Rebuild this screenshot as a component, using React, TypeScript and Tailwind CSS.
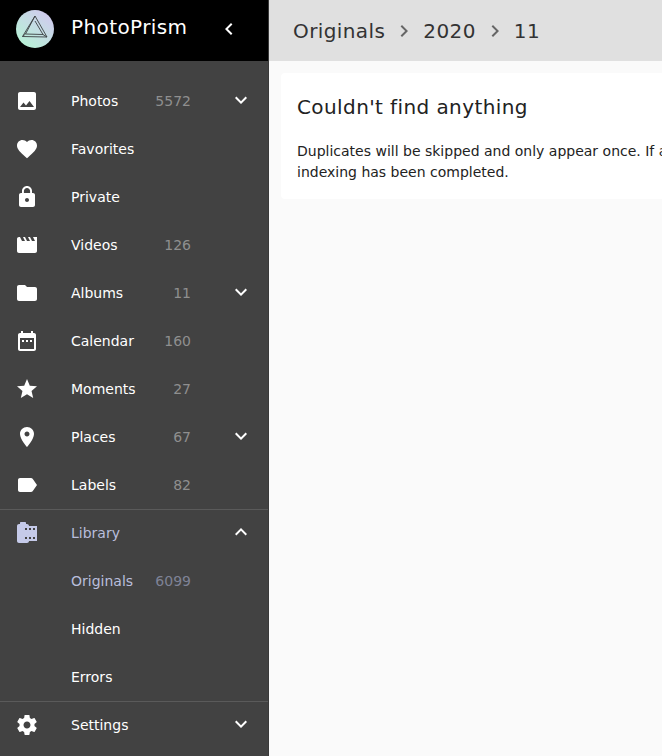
import { ReactNode } from 'react';

const paths = {
  photo: 'M21 19V5c0-1.1-.9-2-2-2H5c-1.1 0-2 .9-2 2v14c0 1.1.9 2 2 2h14c1.1 0 2-.9 2-2zM8.5 13.5l2.5 3.01L14.5 12l4.5 6H5l3.5-4.5z',
  heart: 'M12 21.35l-1.45-1.32C5.4 15.36 2 12.28 2 8.5 2 5.42 4.42 3 7.5 3c1.74 0 3.41.81 4.5 2.09C13.09 3.81 14.76 3 16.5 3 19.58 3 22 5.42 22 8.5c0 3.78-3.4 6.86-8.55 11.54L12 21.35z',
  lock: 'M18 8h-1V6c0-2.76-2.24-5-5-5S7 3.24 7 6v2H6c-1.1 0-2 .9-2 2v10c0 1.1.9 2 2 2h12c1.1 0 2-.9 2-2V10c0-1.1-.9-2-2-2zm-6 9c-1.1 0-2-.9-2-2s.9-2 2-2 2 .9 2 2-.9 2-2 2zm3.1-9H8.9V6c0-1.71 1.39-3.1 3.1-3.1 1.71 0 3.1 1.39 3.1 3.1v2z',
  movie: 'M18 4l2 4h-3l-2-4h-2l2 4h-3l-2-4H8l2 4H7L5 4H4c-1.1 0-1.99.9-1.99 2L2 18c0 1.1.9 2 2 2h16c1.1 0 2-.9 2-2V4h-4z',
  folder: 'M10 4H4c-1.1 0-1.99.9-1.99 2L2 18c0 1.1.9 2 2 2h16c1.1 0 2-.9 2-2V8c0-1.1-.9-2-2-2h-8l-2-2z',
  calendar: 'M9 11H7v2h2v-2zm4 0h-2v2h2v-2zm4 0h-2v2h2v-2zm2-7h-1V2h-2v2H8V2H6v2H5c-1.11 0-1.99.9-1.99 2L3 20c0 1.1.89 2 2 2h14c1.1 0 2-.9 2-2V6c0-1.1-.9-2-2-2zm0 16H5V9h14v11z',
  star: 'M12 17.27L18.18 21l-1.64-7.03L22 9.24l-7.19-.61L12 2 9.19 8.63 2 9.24l5.46 4.73L5.82 21z',
  place: 'M12 2C8.13 2 5 5.13 5 9c0 5.25 7 13 7 13s7-7.75 7-13c0-3.87-3.13-7-7-7zm0 9.5c-1.38 0-2.5-1.12-2.5-2.5s1.12-2.5 2.5-2.5 2.5 1.12 2.5 2.5-1.12 2.5-2.5 2.5z',
  label: 'M17.63 5.84C17.27 5.33 16.67 5 16 5L5 5.01C3.9 5.01 3 5.9 3 7v10c0 1.1.9 1.99 2 1.99L16 19c.67 0 1.27-.33 1.63-.84L22 12l-4.37-6.16z',
  roll: 'M14 5c0-1.1-.9-2-2-2h-1V2c0-.55-.45-1-1-1H6c-.55 0-1 .45-1 1v1H4c-1.1 0-2 .9-2 2v15c0 1.1.9 2 2 2h8c1.1 0 2-.9 2-2h8V5h-8zm-2 13h-2v-2h2v2zm0-9h-2V7h2v2zm4 9h-2v-2h2v2zm0-9h-2V7h2v2zm4 9h-2v-2h2v2zm0-9h-2V7h2v2z',
  settings: 'M19.43 12.98c.04-.32.07-.64.07-.98s-.03-.66-.07-.98l2.11-1.65c.19-.15.24-.42.12-.64l-2-3.46c-.12-.22-.39-.3-.61-.22l-2.49 1c-.52-.4-1.08-.73-1.69-.98l-.38-2.65C14.46 2.18 14.25 2 14 2h-4c-.25 0-.46.18-.49.42l-.38 2.65c-.61.25-1.17.59-1.69.98l-2.49-1c-.23-.09-.49 0-.61.22l-2 3.46c-.13.22-.07.49.12.64l2.11 1.65c-.04.32-.07.65-.07.98s.03.66.07.98l-2.11 1.65c-.19.15-.24.42-.12.64l2 3.46c.12.22.39.3.61.22l2.49-1c.52.4 1.08.73 1.69.98l.38 2.65c.03.24.24.42.49.42h4c.25 0 .46-.18.49-.42l.38-2.65c.61-.25 1.17-.59 1.69-.98l2.49 1c.23.09.49 0 .61-.22l2-3.46c.12-.22.07-.49-.12-.64l-2.11-1.65zM12 15.5c-1.93 0-3.5-1.57-3.5-3.5s1.57-3.5 3.5-3.5 3.5 1.57 3.5 3.5-1.57 3.5-3.5 3.5z',
  down: 'M7.41 8.59L12 13.17l4.59-4.58L18 10l-6 6-6-6 1.41-1.41z',
  up: 'M7.41 15.41L12 10.83l4.59 4.58L18 14l-6-6-6 6z',
  left: 'M15.41 7.41L14 6l-6 6 6 6 1.41-1.41L10.83 12z',
  right: 'M10 6L8.59 7.41 13.17 12l-4.58 4.59L10 18l6-6z',
};

function Icon({ d, className }: { d: string; className?: string }) {
  return (
    <svg viewBox="0 0 24 24" fill="currentColor" className={className}>
      <path d={d} />
    </svg>
  );
}

interface NavItemProps {
  icon?: string;
  label: string;
  count?: number;
  caret?: string;
  active?: boolean;
  divider?: boolean;
}

function NavItem({ icon, label, count, caret, active, divider }: NavItemProps) {
  return (
    <div className={`flex h-12 items-center pl-[15px] ${divider ? 'border-t border-[#5a5a5a] pb-px' : ''}`}>
      <div className="w-[56px] shrink-0">
        {icon && <Icon d={icon} className={`h-6 w-6 ${active ? 'text-[#c5cae9]' : 'text-white'}`} />}
      </div>
      <span className={`text-sm ${active ? 'text-[#b9bedc]' : 'text-white'}`}>{label}</span>
      {count !== undefined && (
        <span className={`ml-auto text-sm ${active ? 'text-[#7f8296]' : 'text-[#8f8f8f]'}`}>{count}</span>
      )}
      <div className={`w-[77px] shrink-0 pl-[38px] ${count === undefined ? 'ml-auto' : ''}`}>
        {caret && <Icon d={caret} className="-mt-[2px] h-6 w-6 text-white" />}
      </div>
    </div>
  );
}

function Logo() {
  return (
    <svg viewBox="0 0 38 38" className="mb-[3px] h-[38px] w-[38px] shrink-0">
      <defs>
        <linearGradient id="prism" x1="0.15" y1="0.95" x2="0.85" y2="0.1">
          <stop offset="0" stopColor="#b6f3d5" />
          <stop offset="1" stopColor="#d0cbee" />
        </linearGradient>
      </defs>
      <circle cx="19" cy="19" r="19" fill="url(#prism)" />
      <g fill="none" stroke="#3b3f42" strokeWidth="0.9" strokeLinejoin="round">
        <path d="M19 6L6.5 26.5L31 27L19 6Z" />
        <path d="M19 6L9.5 24L27 24.5" />
        <path d="M9.5 24L6.5 26.5M27 24.5L31 27M27 24.5L19 11" />
      </g>
    </svg>
  );
}

function Crumb({ children }: { children: ReactNode }) {
  return <span className="text-xl tracking-[0.4px] text-[#333]">{children}</span>;
}

export default function App() {
  return (
    <div className="flex h-screen w-screen overflow-hidden bg-[#fafafa] font-['DejaVu_Sans',sans-serif]">
      {/* Sidebar */}
      <aside className="w-[269px] shrink-0 border-r border-[#3a3a3a] bg-[#424242]">
        <div className="mb-4 flex h-[61px] items-center bg-black pl-4">
          <Logo />
          <span className="mb-2 ml-[17px] text-xl tracking-[0.4px] text-white">PhotoPrism</span>
          <Icon d={paths.left} className="mb-[3px] ml-[30px] h-6 w-6 text-white" />
        </div>
        <NavItem icon={paths.photo} label="Photos" count={5572} caret={paths.down} />
        <NavItem icon={paths.heart} label="Favorites" />
        <NavItem icon={paths.lock} label="Private" />
        <NavItem icon={paths.movie} label="Videos" count={126} />
        <NavItem icon={paths.folder} label="Albums" count={11} caret={paths.down} />
        <NavItem icon={paths.calendar} label="Calendar" count={160} />
        <NavItem icon={paths.star} label="Moments" count={27} />
        <NavItem icon={paths.place} label="Places" count={67} caret={paths.down} />
        <NavItem icon={paths.label} label="Labels" count={82} />
        <NavItem icon={paths.roll} label="Library" caret={paths.up} active divider />
        <NavItem label="Originals" count={6099} active />
        <NavItem label="Hidden" />
        <NavItem label="Errors" />
        <NavItem icon={paths.settings} label="Settings" caret={paths.down} divider />
      </aside>

      {/* Main */}
      <main className="min-w-0 flex-1">
        <div className="flex h-[61px] items-center gap-[7px] bg-[#e0e0e0] pl-6">
          <Crumb>Originals</Crumb>
          <Icon d={paths.right} className="h-6 w-6 text-[#666]" />
          <Crumb>2020</Crumb>
          <Icon d={paths.right} className="h-6 w-6 text-[#666]" />
          <Crumb>11</Crumb>
        </div>
        <div className="ml-3 mt-3 h-[126px] w-[900px] rounded-sm bg-white px-4 pt-4">
          <h3 className="text-xl leading-9 tracking-[0.4px] text-[#222]">Couldn't find anything</h3>
          <p className="mt-4 text-sm leading-[21px] text-[#222]">
            Duplicates will be skipped and only appear once. If a file you expect is missing, please re-index your library
            <br />
            indexing has been completed.
          </p>
        </div>
      </main>
    </div>
  );
}
